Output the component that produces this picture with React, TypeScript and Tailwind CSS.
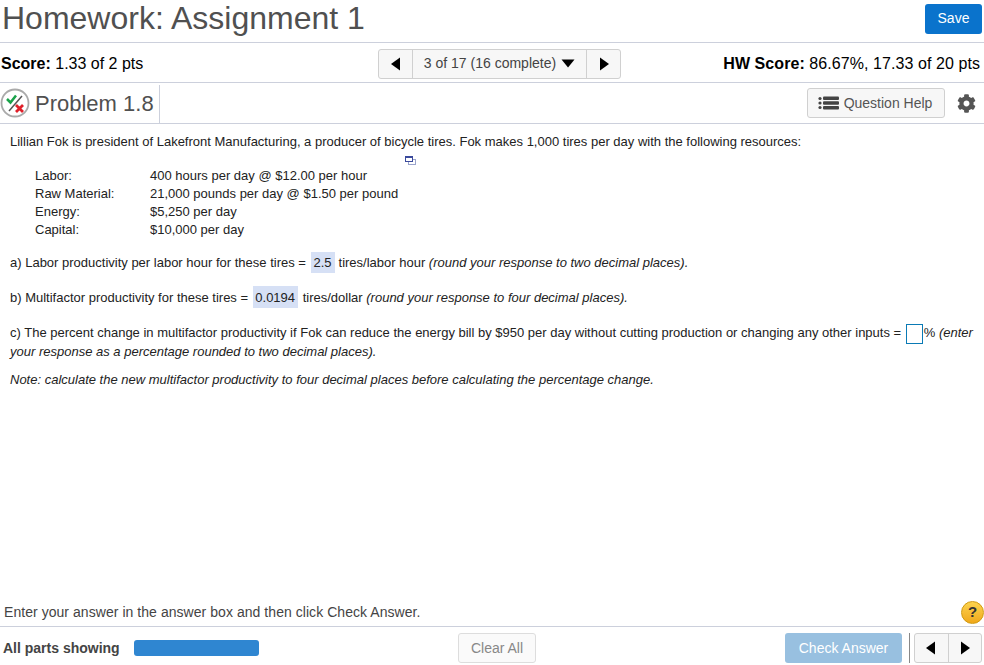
import { FaCog } from 'react-icons/fa';

const LeftArrow = () => (
  <svg width="12" height="14" viewBox="0 0 12 14"><path d="M10 0.5V13.5L1 7Z" fill="#000" /></svg>
);
const RightArrow = () => (
  <svg width="12" height="14" viewBox="0 0 12 14"><path d="M2 0.5V13.5L11 7Z" fill="#000" /></svg>
);

const resources = [
  ['Labor:', '400 hours per day @ $12.00 per hour'],
  ['Raw Material:', '21,000 pounds per day @ $1.50 per pound'],
  ['Energy:', '$5,250 per day'],
  ['Capital:', '$10,000 per day'],
];

export default function App() {
  return (
    <div className="h-[665px] w-[984px] flex flex-col overflow-hidden bg-white font-['Liberation_Sans',Arial,sans-serif] text-[#222]">
      {/* titulo */}
      <div className="h-[43px] shrink-0 flex items-center justify-between border-b border-[#ccd0dc] pl-[2px] pr-[2px]">
        <h1 className="text-[32px] leading-[38px] text-[#505050] -mt-[7px]">Homework: Assignment 1</h1>
        <button className="w-[57px] h-[30px] -mt-[5px] rounded-[3px] bg-[#0a73cc] text-white text-[14px]">Save</button>
      </div>

      {/* score */}
      <div className="h-[40px] shrink-0 flex items-center border-b border-[#ccd0dc] pl-[1px] pr-[4px] pt-[2px] text-[16px] text-black">
        <div className="w-[377px]"><b>Score:</b> 1.33 of 2 pts</div>
        <div className="flex h-[30px] w-[243px] shrink-0 rounded-[3px] border border-[#d0d0d0] bg-[#f7f7f7] text-[14px] text-[#444]">
          <div className="w-[34px] flex items-center justify-center border-r border-[#d0d0d0]"><LeftArrow /></div>
          <div className="flex-1 flex items-center justify-center gap-[5px] border-r border-[#d0d0d0]">
            3 of 17 (16 complete)
            <svg width="14" height="9" viewBox="0 0 14 9"><path d="M0.5 0.5H13.5L7 8.5Z" fill="#000" /></svg>
          </div>
          <div className="w-[33px] flex items-center justify-center"><RightArrow /></div>
        </div>
        <div className="flex-1 text-right tracking-[0.07px]"><b>HW Score:</b> 86.67%, 17.33 of 20 pts</div>
      </div>

      {/* problema */}
      <div className="h-[41px] shrink-0 flex items-center justify-between border-b border-[#ccd0dc] pr-[8px]">
        <div className="flex items-center h-full">
          <svg width="30" height="30" viewBox="0 0 30 30">
            <circle cx="15" cy="15" r="13.5" fill="#fff" stroke="#aaa" strokeWidth="1.8" />
            <path d="M9 23L22 8" stroke="#555" strokeWidth="1.5" />
            <path d="M7 11L10.5 14.5L16 7.5" fill="none" stroke="#1aa34a" strokeWidth="2.5" />
            <path d="M16 17L23 24M23 17L16 24" stroke="#e0202a" strokeWidth="2.8" />
          </svg>
          <span className="ml-[5px] text-[22px] text-[#505050]">Problem 1.8</span>
          <div className="ml-[5px] mt-[1px] h-[38px] w-px bg-[#ccd0dc]" />
        </div>
        <div className="flex items-center gap-[12px]">
          <button className="flex h-[30px] w-[138px] items-center justify-center gap-[4px] rounded-[3px] border border-[#d0d0d0] bg-[#f7f7f7] pr-[2px] text-[14px] text-[#555]">
            <svg width="22" height="14" viewBox="0 0 22 14" fill="#444">
              <circle cx="2" cy="2.5" r="1.6" /><circle cx="2" cy="7" r="1.6" /><circle cx="2" cy="11.5" r="1.6" />
              <rect x="5" y="0.5" width="16" height="3.6" rx="1" /><rect x="5" y="5.2" width="16" height="3.6" rx="1" /><rect x="5" y="9.9" width="16" height="3.6" rx="1" />
            </svg>
            Question Help
          </button>
          <FaCog size={19} color="#555" />
        </div>
      </div>

      {/* contenido */}
      <div className="flex-1 pl-[10px] pr-[8px] pt-[9px] text-[13px] leading-[17px] text-[#222]">
        <p>Lillian Fok is president of Lakefront Manufacturing, a producer of bicycle tires. Fok makes 1,000 tires per day with the following resources:</p>
        <div className="ml-[395px] mt-[6px] h-[10px]">
          <svg width="11" height="9" viewBox="0 0 11 9" fill="none">
            <rect x="3.5" y="3.5" width="7" height="5" stroke="#9aa4cc" />
            <rect x="0.5" y="0.5" width="7" height="5" fill="#fff" stroke="#3b4a9c" />
            <rect x="0.5" y="0.5" width="7" height="1.5" fill="#3b4a9c" />
          </svg>
        </div>
        <div className="ml-[25px]">
          {resources.map(([label, value]) => (
            <div key={label} className="flex h-[18px] items-center">
              <span className="w-[115px]">{label}</span>
              <span>{value}</span>
            </div>
          ))}
        </div>
        <p className="mt-[13px] flex h-[22px] items-center whitespace-pre">
          a) Labor productivity per labor hour for these tires ={' '}
          <span className="ml-[1px] mr-[4px] inline-flex h-[21px] w-[24px] items-center justify-center bg-[#d6e0f5]">2.5</span>
          {' '}tires/labor hour <i>(round your response to two decimal places).</i>
        </p>
        <p className="mt-[13px] flex h-[22px] items-center whitespace-pre">
          b) Multifactor productivity for these tires ={' '}
          <span className="ml-[1px] mr-[5px] inline-flex h-[22px] w-[45px] items-center justify-center bg-[#d6e0f5]">0.0194</span>
          {' '}tires/dollar <i>(round your response to four decimal places).</i>
        </p>
        <p className="mt-[15px] leading-[19px]">
          c) The percent change in multifactor productivity if Fok can reduce the energy bill by $950 per day without cutting production or changing any other inputs ={' '}
          <span className="ml-[1px] mr-[1px] -my-[2px] inline-block h-[20px] w-[17px] border border-[#0a7ab5] align-middle" />
          % <i>(enter your response as a percentage rounded to two decimal places).</i>
        </p>
        <p className="mt-[10px]"><i>Note: calculate the new multifactor productivity to four decimal places before calculating the percentage change.</i></p>
      </div>

      {/* instrucciones */}
      <div className="h-[29px] shrink-0 flex items-center justify-between border-b border-[#ccd0dc] pl-[4px] pr-[0px] text-[14px] text-[#444]">
        <span className="mt-[1px] tracking-[0.05px]">Enter your answer in the answer box and then click Check Answer.</span>
        <div className="flex h-[23px] w-[23px] items-center justify-center rounded-full border border-[#d19a10] bg-gradient-to-b from-[#fcd34d] to-[#f0a818] text-[15px] font-bold text-[#333]">?</div>
      </div>

      {/* barra inferior */}
      <div className="h-[38px] shrink-0 flex items-center pl-[3px] pr-[2px] pt-[4px]">
        <b className="w-[131px] shrink-0 text-[14px] text-[#444]">All parts showing</b>
        <div className="h-[16px] w-[125px] shrink-0 rounded-[3px] bg-[#2f86d1]" />
        <button className="ml-[199px] h-[30px] w-[78px] shrink-0 rounded-[3px] border border-[#ddd] bg-[#fafafa] text-[14px] text-[#888]">Clear All</button>
        <button className="ml-[249px] h-[30px] w-[117px] shrink-0 rounded-[3px] bg-[#98c0e0] text-[14px] text-white">Check Answer</button>
        <div className="ml-[7px] h-[30px] w-px shrink-0 bg-[#888]" />
        <div className="ml-[4px] flex h-[30px] w-[68px] shrink-0 rounded-[3px] border border-[#d0d0d0] bg-[#f7f7f7]">
          <div className="flex-1 flex items-center justify-center border-r border-[#d0d0d0]"><LeftArrow /></div>
          <div className="flex-1 flex items-center justify-center"><RightArrow /></div>
        </div>
      </div>
    </div>
  );
}
